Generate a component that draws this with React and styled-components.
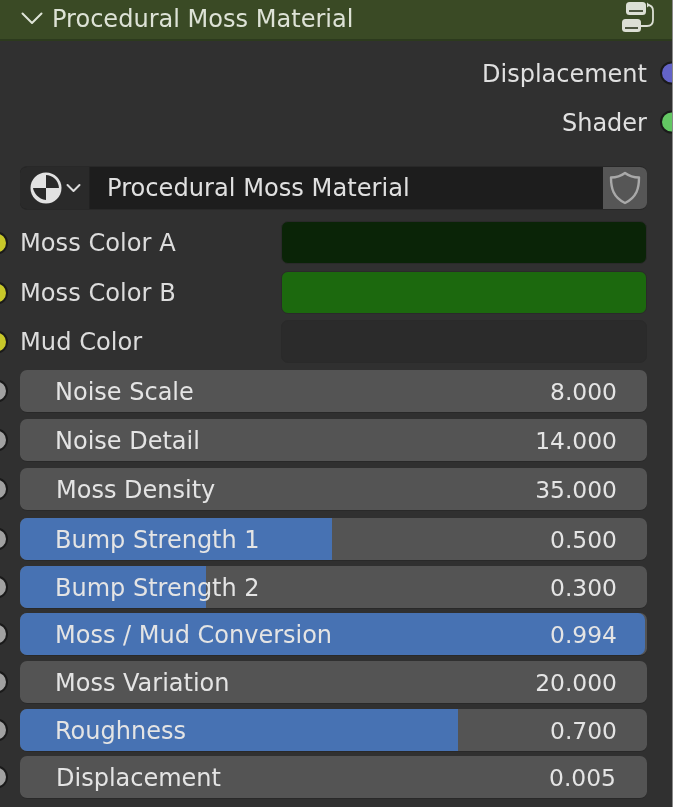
import React from "react";
import styled, { createGlobalStyle } from "styled-components";

const Global = createGlobalStyle`
  html, body { margin: 0; padding: 0; width: 673px; height: 807px; overflow: hidden; background: #303030; }
  #root { width: 673px; height: 807px; overflow: hidden; }
  * { box-sizing: border-box; }
`;

const Node = styled.div`
  position: relative;
  width: 673px;
  height: 807px;
  background: #303030;
  font-family: "DejaVu Sans", sans-serif;
  font-size: 24px;
  color: #dcdcdc;
  overflow: hidden;
  display: flex;
  flex-direction: column;
  border-right: 1px solid #8a8a8a;
  filter: blur(0.35px);
`;

const Header = styled.header`
  height: 41px;
  flex: none;
  display: flex;
  align-items: center;
  padding: 0 17px 2px 21px;
  background: #3a4a25;
  border-bottom: 2px solid #2c3a1d;
  color: #dde2d6;
`;

const HeaderTitle = styled.span`
  margin-left: 9px;
  flex: 1;
  white-space: nowrap;
  font-size: 24.05px;
`;

const HeaderIcon = styled.span`
  display: flex;
  margin-top: -3px;
`;

const Outputs = styled.div`
  display: flex;
  flex-direction: column;
  align-items: flex-end;
  padding: 19px 25px 0 0;
  gap: 20px;
  height: 125px;
  flex: none;
`;

const OutputRow = styled.div`
  position: relative;
  height: 29px;
  line-height: 29px;
  color: #e0e0e0;
`;

const Socket = styled.span`
  position: absolute;
  width: 23px;
  height: 23px;
  border-radius: 50%;
  background: ${(p) => p.$color};
  border: 2px solid #1a1a1a;
  top: 50%;
  transform: translateY(calc(-50% + ${(p) => p.$dy || 0}px));
  ${(p) => (p.$side === "right" ? "right: -36px;" : "left: -35px;")}
`;

const Fields = styled.div`
  padding: 0 25px 0 20px;
  display: flex;
  flex-direction: column;
`;

const MaterialRow = styled.div`
  height: 44px;
  display: flex;
  width: 627px;
  border-radius: 7px;
  overflow: hidden;
  border-top: 1px solid #282828;
  border-bottom: 1px solid #282828;
  background: #1d1d1d;
`;

const MaterialPicker = styled.div`
  width: 70px;
  flex: none;
  display: flex;
  align-items: center;
  padding-left: 10px;
  gap: 4px;
  background: #2a2a2a;
  border-right: 1px solid #222222;
`;

const MaterialName = styled.div`
  flex: 1;
  padding-left: 17px;
  line-height: 42px;
  color: #e0e0e0;
  white-space: nowrap;
  font-size: 24.15px;
`;

const ShieldButton = styled.div`
  width: 44px;
  flex: none;
  display: flex;
  align-items: center;
  justify-content: center;
  background: #565656;
`;

const ColorRow = styled.div`
  position: relative;
  height: 43px;
  margin-top: ${(p) => p.$mt}px;
  display: flex;
  align-items: center;
  justify-content: space-between;
`;

const ColorLabel = styled.span`
  color: #dcdcdc;
  white-space: nowrap;
  font-size: 24.15px;
`;

const Swatch = styled.div`
  width: 366px;
  height: 43px;
  border-radius: 7px;
  background: ${(p) => p.$color};
  border: 1px solid #2a2a2a;
`;

const Slider = styled.div`
  position: relative;
  height: 43px;
  margin-top: ${(p) => p.$mt}px;
  background: #545454;
  border-radius: 7px;
  border-bottom: 1px solid #292929;
  display: flex;
  align-items: center;
  justify-content: space-between;
  padding: 2px ${(p) => p.$pr}px 0 ${(p) => p.$pl}px;
`;

const SliderFill = styled.div`
  position: absolute;
  left: 0;
  top: 0;
  bottom: 0;
  background: #4772b3;
  border-radius: ${(p) => (p.$full ? "7px" : "7px 0 0 7px")};
`;

const SliderLabel = styled.span`
  position: relative;
  color: #e4e4e4;
  white-space: nowrap;
  font-size: 24px;
`;

const SliderValue = styled.span`
  position: relative;
  color: #e4e4e4;
  white-space: nowrap;
  font-size: 23.4px;
`;

const Chevron = () => (
  <svg width="22" height="22" viewBox="0 0 22 22" fill="none" stroke="#dfe4d8" strokeWidth="2" strokeLinecap="round" strokeLinejoin="round">
    <path d="M1.5 5.5 L11 15 L20.5 5.5" />
  </svg>
);

const SmallChevron = () => (
  <svg width="15" height="10" viewBox="0 0 15 10" fill="none" stroke="#dcdcdc" strokeWidth="2" strokeLinecap="round" strokeLinejoin="round">
    <path d="M1.5 2 L7.5 8 L13.5 2" />
  </svg>
);

const SphereIcon = () => (
  <svg width="32" height="32" viewBox="0 0 32 32">
    <circle cx="16" cy="16" r="15.5" fill="#e2e2e2" />
    <path d="M16 3 C22 3 28.5 8 29 16 L16 16 Z" fill="#2a2a2a" />
    <path d="M16 16 L3 16 C4 21 8 27 16 28 Z" fill="#2a2a2a" />
  </svg>
);

const ShieldIcon = () => (
  <svg width="32" height="34" viewBox="0 0 32 34" fill="none" stroke="#a9a9a9" strokeWidth="2.4" strokeLinejoin="round">
    <path d="M16 2 C12 5 7 6.5 2 6.5 C2 17 4 26 16 32 C28 26 30 17 30 6.5 C25 6.5 20 5 16 2 Z" />
  </svg>
);

const GroupIcon = () => (
  <svg width="33" height="33" viewBox="0 0 33 33">
    <rect x="4" y="1" width="20" height="13" rx="3.5" fill="#dcdfd5" />
    <rect x="0" y="18" width="19" height="13" rx="3.5" fill="#dcdfd5" />
    <rect x="7" y="9" width="14" height="2" fill="#4d5640" />
    <rect x="3" y="26" width="13" height="2" fill="#4d5640" />
    <path d="M25 4 C29.5 4 31 6 31 10 L31 19 C31 23 29 25 25 25 L19 25" fill="none" stroke="#dcdfd5" strokeWidth="1.8" />
    <path d="M25 1.5 L28 4 L25 6.5 Z" fill="#dcdfd5" />
  </svg>
);

const colors = [
  { label: "Moss Color A", color: "#0a2407", mt: 11 },
  { label: "Moss Color B", color: "#1c690e", mt: 7 },
  { label: "Mud Color", color: "#2b2b2b", mt: 6 },
];

const sliders = [
  { label: "Noise Scale", value: "8.000", mt: 7, pl: 35, pr: 30 },
  { label: "Noise Detail", value: "14.000", mt: 6, pl: 35, pr: 30 },
  { label: "Moss Density", value: "35.000", mt: 6, pl: 36, pr: 30 },
  { label: "Bump Strength 1", value: "0.500", mt: 7, pl: 35, pr: 30, fill: 0.4976 },
  { label: "Bump Strength 2", value: "0.300", mt: 5, pl: 35, pr: 30, fill: 0.297 },
  { label: "Moss / Mud Conversion", value: "0.994", mt: 4, pl: 35, pr: 30, fill: 0.997 },
  { label: "Moss Variation", value: "20.000", mt: 5, pl: 35, pr: 30 },
  { label: "Roughness", value: "0.700", mt: 5, pl: 35, pr: 30, fill: 0.699 },
  { label: "Displacement", value: "0.005", mt: 4, pl: 36, pr: 31 },
];

export default function App() {
  return (
    <Node>
      <Global />
      <Header>
        <Chevron />
        <HeaderTitle>Procedural Moss Material</HeaderTitle>
        <HeaderIcon>
          <GroupIcon />
        </HeaderIcon>
      </Header>
      <Outputs>
        <OutputRow>
          Displacement
          <Socket $side="right" $color="#6363c7" $dy={-2} />
        </OutputRow>
        <OutputRow>
          Shader
          <Socket $side="right" $color="#63c763" $dy={-2} />
        </OutputRow>
      </Outputs>
      <Fields>
        <MaterialRow>
          <MaterialPicker>
            <SphereIcon />
            <SmallChevron />
          </MaterialPicker>
          <MaterialName>Procedural Moss Material</MaterialName>
          <ShieldButton>
            <ShieldIcon />
          </ShieldButton>
        </MaterialRow>
        {colors.map((c) => (
          <ColorRow key={c.label} $mt={c.mt}>
            <Socket $side="left" $color="#c7c729" />
            <ColorLabel>{c.label}</ColorLabel>
            <Swatch $color={c.color} />
          </ColorRow>
        ))}
        {sliders.map((s) => (
          <Slider key={s.label} $mt={s.mt} $pl={s.pl} $pr={s.pr}>
            <Socket $side="left" $color="#a1a1a1" />
            {s.fill ? <SliderFill $full={s.fill > 0.99} style={{ width: `${s.fill * 100}%` }} /> : null}
            <SliderLabel>{s.label}</SliderLabel>
            <SliderValue>{s.value}</SliderValue>
          </Slider>
        ))}
      </Fields>
    </Node>
  );
}
